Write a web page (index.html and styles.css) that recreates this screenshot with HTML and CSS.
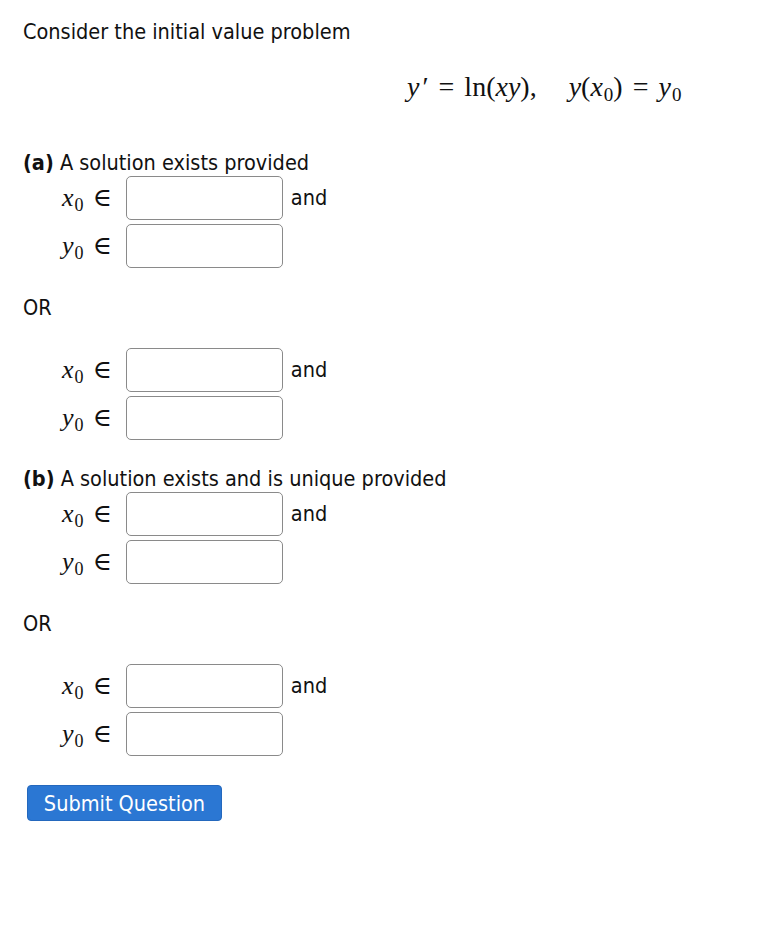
FILE: index.html
```html
<!DOCTYPE html>
<html>
<head>
<meta charset="utf-8">
<link rel="stylesheet" href="styles.css">
</head>
<body>
<div class="page">
  <p class="intro">Consider the initial value problem</p>
  <div class="display">
    <span class="m"><i>y</i><span class="prime">&#8242;</span><span class="rel">=</span>ln(<i>xy</i>),<span class="gap"></span><i>y</i>(<i>x</i><sub>0</sub>)<span class="rel">=</span><i>y</i><sub>0</sub></span>
  </div>

  <p class="part"><b>(a)</b> A solution exists provided</p>
  <div class="cond">
    <div class="row"><span class="m"><i>x</i><sub>0</sub><span class="rel">&#8712;</span></span><input class="ans" type="text"><span class="and">and</span></div>
    <div class="row"><span class="m"><i>y</i><sub>0</sub><span class="rel">&#8712;</span></span><input class="ans" type="text"></div>
  </div>
  <p class="or">OR</p>
  <div class="cond cond-or">
    <div class="row"><span class="m"><i>x</i><sub>0</sub><span class="rel">&#8712;</span></span><input class="ans" type="text"><span class="and">and</span></div>
    <div class="row"><span class="m"><i>y</i><sub>0</sub><span class="rel">&#8712;</span></span><input class="ans" type="text"></div>
  </div>

  <p class="part part-b"><b>(b)</b> A solution exists and is unique provided</p>
  <div class="cond">
    <div class="row"><span class="m"><i>x</i><sub>0</sub><span class="rel">&#8712;</span></span><input class="ans" type="text"><span class="and">and</span></div>
    <div class="row"><span class="m"><i>y</i><sub>0</sub><span class="rel">&#8712;</span></span><input class="ans" type="text"></div>
  </div>
  <p class="or">OR</p>
  <div class="cond cond-or">
    <div class="row"><span class="m"><i>x</i><sub>0</sub><span class="rel">&#8712;</span></span><input class="ans" type="text"><span class="and">and</span></div>
    <div class="row"><span class="m"><i>y</i><sub>0</sub><span class="rel">&#8712;</span></span><input class="ans" type="text"></div>
  </div>

  <div class="actions">
    <button class="submit" type="button">Submit Question</button>
  </div>
</div>
</body>
</html>
```

FILE: styles.css
```css
html, body {
  margin: 0;
  padding: 0;
  background: #ffffff;
}

.page {
  padding: 19px 23px;
  font-family: "DejaVu Sans Condensed", "DejaVu Sans", sans-serif;
  font-size: 21.5px;
  line-height: 26px;
  color: #111111;
}

p {
  margin: 0;
}

.m {
  font-family: "Liberation Serif", "DejaVu Serif", serif;
  font-size: 26px;
  white-space: nowrap;
}

.m i {
  font-family: "Liberation Serif", "DejaVu Serif", serif;
  font-style: italic;
}

.m sub {
  font-size: 18px;
  vertical-align: -5px;
  line-height: 0;
  padding-left: 1px;
}

.rel {
  margin: 0 9px;
}

.prime {
  margin-left: 3px;
}

.display {
  margin-top: 27px;
  padding-left: 384px;
  line-height: 30px;
}

.display .m {
  font-size: 28px;
}

.display .m sub {
  font-size: 19px;
}

.display .rel {
  margin: 0 10px;
}

.display .gap {
  display: inline-block;
  width: 32px;
}

.part {
  margin-top: 46px;
}

.part-b {
  margin-top: 26px;
}

.cond {
  margin-top: 0;
  padding-left: 39px;
}

.cond-or {
  margin-top: 27px;
}

.row {
  height: 44px;
  display: flex;
  align-items: center;
}

.row .rel {
  margin-right: 0;
}

.row + .row {
  margin-top: 4px;
}

.ans {
  box-sizing: border-box;
  width: 157px;
  height: 44px;
  margin: 0 8px 0 14px;
  border: 1px solid #8a8a8a;
  border-radius: 5px;
  background: #ffffff;
  font: inherit;
}

.or {
  margin-top: 27px;
}

.actions {
  margin-top: 29px;
  padding-left: 4px;
}

.submit {
  box-sizing: border-box;
  width: 195px;
  height: 36px;
  padding: 0;
  border: 1px solid #2468bd;
  border-radius: 4px;
  background: #2b77d3;
  color: #ffffff;
  font-family: "DejaVu Sans Condensed", "DejaVu Sans", sans-serif;
  font-size: 21.5px;
}
```
